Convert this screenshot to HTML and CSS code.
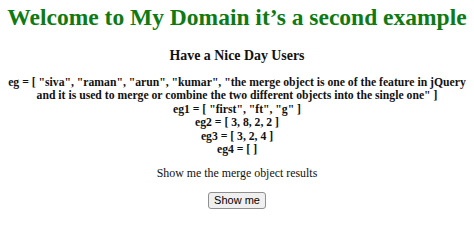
FILE: index.html
```html
<!DOCTYPE html>
<html>
<head>
<meta charset="utf-8">
<link rel="stylesheet" href="styles.css">
</head>
<body>
<div class="page">
  <h1 class="title">Welcome to My Domain it’s a second example</h1>
  <h3 class="subtitle">Have a Nice Day Users</h3>
  <div class="data">
    eg = [ "siva", "raman", "arun", "kumar", "the merge object is one of the feature in jQuery and it is used to merge or combine the two different objects into the single one" ]<br>
    eg1 = [ "first", "ft", "g" ]<br>
    eg2 = [ 3, 8, 2, 2 ]<br>
    eg3 = [ 3, 2, 4 ]<br>
    eg4 = [ ]
  </div>
  <p class="prompt">Show me the merge object results</p>
  <button class="btn">Show me</button>
</div>
</body>
</html>
```

FILE: styles.css
```css
html, body {
  margin: 0;
  padding: 0;
  background: #fff;
}
.page {
  font-family: "Liberation Serif", "Times New Roman", serif;
  text-align: center;
  color: #111;
  padding: 3.5px 2px 0;
}
.title {
  font-size: 23.5px;
  line-height: 26px;
  margin: 0;
  color: #0e7a12;
  font-weight: bold;
}
.subtitle {
  font-size: 13.9px;
  line-height: 16px;
  margin: 18px 0 12px;
  font-weight: bold;
}
.data {
  font-size: 11.7px;
  line-height: 13.6px;
  font-weight: bold;
}
.prompt {
  font-size: 11.9px;
  line-height: 15px;
  margin: 9px 0 9px;
}
.btn {
  font-family: "Liberation Sans", Arial, sans-serif;
  font-size: 11px;
  line-height: 13px;
  padding: 1px 5px;
  background: #efefef;
  border: 1px solid #8f8f8f;
  border-radius: 3px;
  color: #000;
}
```
